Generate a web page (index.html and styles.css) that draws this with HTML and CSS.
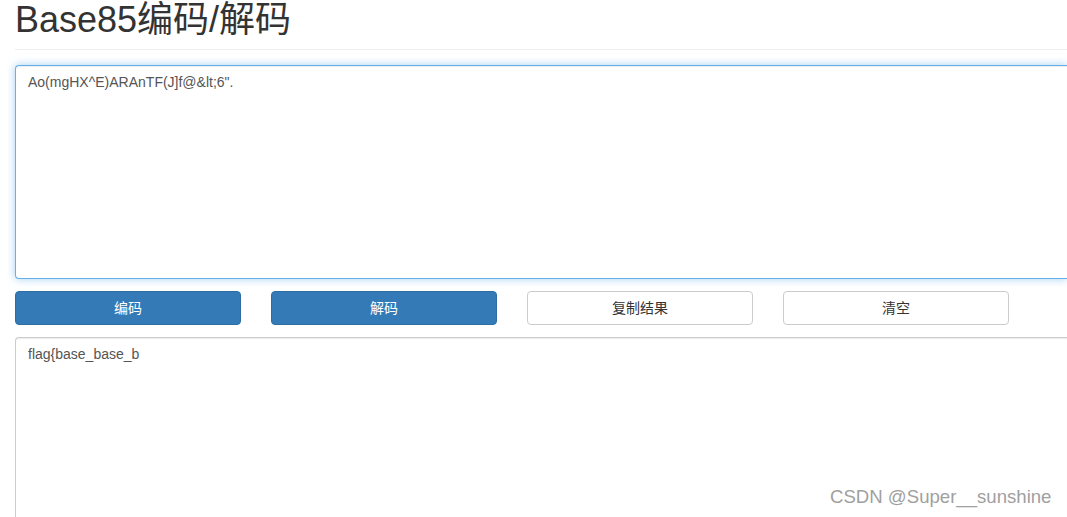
FILE: index.html
```html
<!DOCTYPE html>
<html lang="zh-CN">
<head>
<meta charset="utf-8">
<title>Base85编码/解码</title>
<link rel="stylesheet" href="styles.css">
</head>
<body>
<div class="page">
  <h1 class="title">Base85编码/解码</h1>
  <hr class="divider">
  <textarea class="box box-input" spellcheck="false">Ao(mgHX^E)ARAnTF(J]f@&amp;lt;6".</textarea>
  <div class="actions">
    <button class="btn btn-primary">编码</button>
    <button class="btn btn-primary">解码</button>
    <button class="btn btn-default">复制结果</button>
    <button class="btn btn-default">清空</button>
  </div>
  <textarea class="box box-output" spellcheck="false">flag{base_base_b</textarea>
</div>
<div class="watermark">CSDN @Super__sunshine</div>
</body>
</html>
```
FILE: styles.css
```css
html, body {
  margin: 0;
  padding: 0;
  background: #fff;
  overflow: hidden;
  width: 1067px;
  height: 517px;
}
body {
  font-family: "Liberation Sans", "Noto Sans CJK SC", Arial, sans-serif;
  font-size: 14px;
  color: #333;
  position: relative;
}
.page {
  padding-left: 15px;
}
.title {
  margin: 0 0 9px 0;
  font-size: 36px;
  font-weight: 400;
  line-height: 40px;
  color: #333;
  font-family: "Liberation Sans", "Noto Sans CJK SC", sans-serif;
}
.divider {
  margin: 0 0 15px 0;
  border: 0;
  border-top: 1px solid #eee;
  height: 0;
}
.box {
  display: block;
  box-sizing: border-box;
  width: 100%;
  margin: 0;
  padding: 6px 12px;
  font-family: "Liberation Sans", "Noto Sans CJK SC", sans-serif;
  font-size: 14px;
  line-height: 20px;
  color: #555;
  background: #fff;
  border: 1px solid #ccc;
  border-right: 0;
  border-radius: 4px 0 0 4px;
  resize: none;
  outline: none;
  overflow: hidden;
  box-shadow: inset 0 1px 1px rgba(0,0,0,.075);
}
.box-input {
  height: 214px;
  border-color: #66afe9;
  box-shadow: inset 0 1px 1px rgba(0,0,0,.075), 0 0 8px rgba(102,175,233,.6);
}
.box-output {
  height: 200px;
}
.actions {
  display: flex;
  gap: 30px;
  margin: 12px 0;
}
.btn {
  box-sizing: border-box;
  width: 226px;
  height: 34px;
  padding: 6px 12px;
  font-family: "Liberation Sans", "Noto Sans CJK SC", sans-serif;
  font-size: 14px;
  line-height: 20px;
  border-radius: 4px;
  border: 1px solid transparent;
  cursor: pointer;
}
.btn-primary {
  color: #fff;
  background: #337ab7;
  border-color: #2e6da4;
}
.btn-default {
  color: #333;
  background: #fff;
  border-color: #ccc;
}
.watermark {
  position: absolute;
  left: 830px;
  top: 486px;
  font-family: "Liberation Sans", sans-serif;
  font-size: 18.6px;
  color: #a0a0a0;
  text-shadow: 0 0 1px #fff;
  white-space: nowrap;
}
```
